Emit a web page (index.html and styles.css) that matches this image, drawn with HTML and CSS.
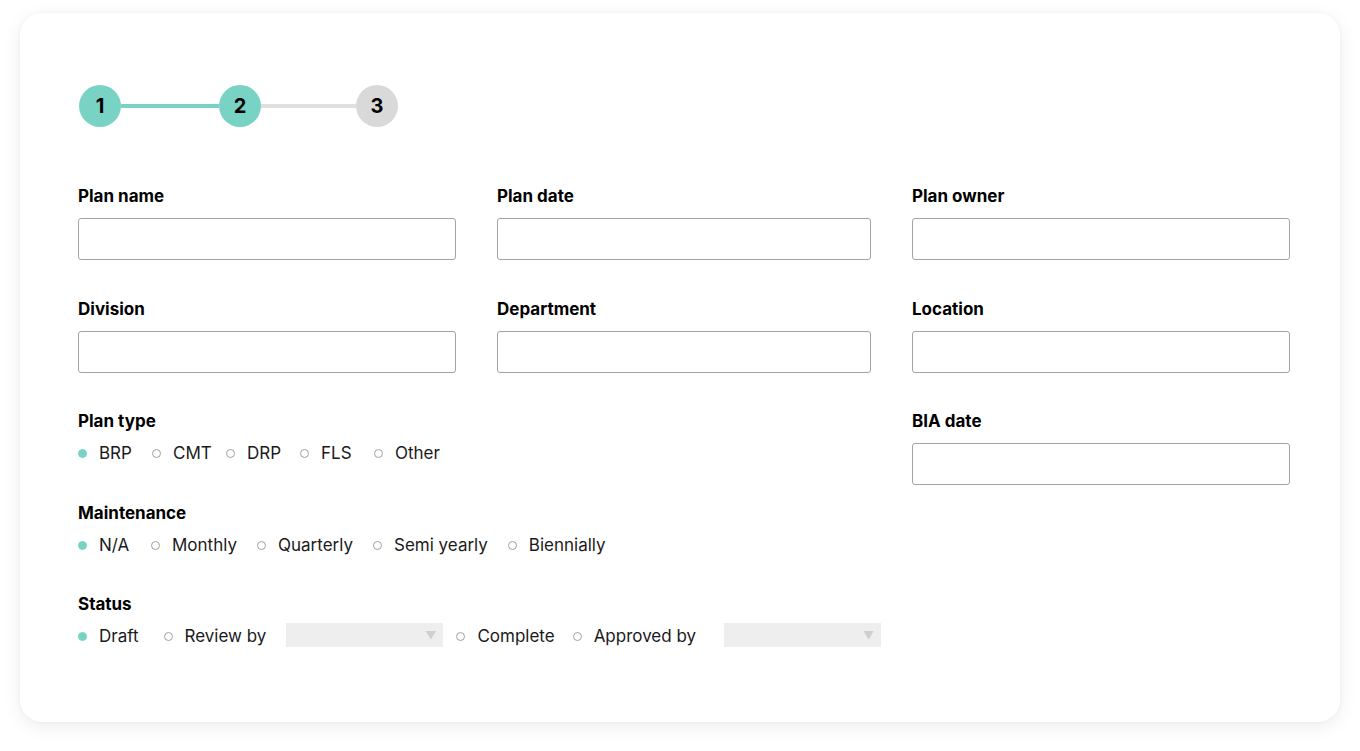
FILE: index.html
```html
<!DOCTYPE html>
<html lang="en">
<head>
<meta charset="utf-8">
<title>Plan details</title>
<link rel="stylesheet" href="styles.css">
</head>
<body>
<div class="card">
  <div class="stepper">
    <div class="step done">1</div>
    <div class="bar done"></div>
    <div class="step done">2</div>
    <div class="bar bar2"></div>
    <div class="step">3</div>
  </div>

  <div class="form">
    <div class="field">
      <div class="label">Plan name</div>
      <div class="input"></div>
    </div>
    <div class="field">
      <div class="label">Plan date</div>
      <div class="input"></div>
    </div>
    <div class="field">
      <div class="label">Plan owner</div>
      <div class="input"></div>
    </div>

    <div class="field">
      <div class="label">Division</div>
      <div class="input"></div>
    </div>
    <div class="field">
      <div class="label">Department</div>
      <div class="input"></div>
    </div>
    <div class="field">
      <div class="label">Location</div>
      <div class="input"></div>
    </div>

    <div class="groups">
      <div class="group">
        <div class="label">Plan type</div>
        <div class="radios fixed">
          <div class="opt"><span class="dot on"></span>BRP</div>
          <div class="opt"><span class="dot"></span>CMT</div>
          <div class="opt"><span class="dot"></span>DRP</div>
          <div class="opt"><span class="dot"></span>FLS</div>
          <div class="opt"><span class="dot"></span>Other</div>
        </div>
      </div>
      <div class="group">
        <div class="label">Maintenance</div>
        <div class="radios">
          <div class="opt"><span class="dot on"></span>N/A</div>
          <div class="opt"><span class="dot"></span>Monthly</div>
          <div class="opt"><span class="dot"></span>Quarterly</div>
          <div class="opt"><span class="dot"></span>Semi yearly</div>
          <div class="opt"><span class="dot"></span>Biennially</div>
        </div>
      </div>
      <div class="group group-status">
        <div class="label">Status</div>
        <div class="radios status">
          <div class="opt s-draft"><span class="dot on"></span>Draft</div>
          <div class="opt s-review"><span class="dot"></span>Review by</div>
          <div class="select s-sel1"><span class="caret">▼</span></div>
          <div class="opt s-complete"><span class="dot"></span>Complete</div>
          <div class="opt s-approved"><span class="dot"></span>Approved by</div>
          <div class="select"><span class="caret">▼</span></div>
        </div>
      </div>
    </div>

    <div class="field field-bia">
      <div class="label">BIA date</div>
      <div class="input"></div>
    </div>
  </div>
</div>
</body>
</html>
```

FILE: styles.css
```css
* { box-sizing: border-box; }

html, body {
  margin: 0;
  padding: 0;
  background: #ffffff;
}

body {
  font-family: Inter, "Liberation Sans", sans-serif;
  color: #111;
  padding: 13px 20px 29px;
}

.card {
  height: 709px;
  background: #fff;
  border-radius: 22px;
  box-shadow: 0 4px 18px rgba(0, 0, 0, 0.08), 0 0 4px rgba(0, 0, 0, 0.03);
  padding: 72px 50px 0 58px;
}

/* stepper */
.stepper {
  display: flex;
  align-items: center;
  margin-left: 1px;
}

.step {
  width: 42px;
  height: 42px;
  border-radius: 50%;
  background: #d9d9d9;
  display: flex;
  align-items: center;
  justify-content: center;
  font-weight: 700;
  font-size: 20px;
  color: #000;
}

.step.done { background: #79d3c5; }

.bar {
  height: 4px;
  width: 98px;
  background: #e0e0e0;
}

.bar.done { background: #79d3c5; }
.bar2 { width: 95px; }

/* form */
.form {
  margin-top: 58px;
  display: grid;
  grid-template-columns: 378px 374px 378px;
  column-gap: 41px;
  row-gap: 38px;
  align-items: start;
}

.label {
  font-weight: 700;
  font-size: 17px;
  line-height: 20px;
  padding-top: 1px;
  color: #000;
}

.field .label { margin-bottom: 12px; }

.field-bia { margin-top: -1px; }

.input {
  height: 42px;
  border: 1px solid #a3a3a3;
  border-radius: 3px;
  background: #fff;
}

.groups {
  grid-column: 1 / span 2;
  display: flex;
  flex-direction: column;
  gap: 39px;
  margin-top: -1px;
}

.group .label { margin-bottom: 12px; }

.group-status { margin-top: -1px; }

.radios {
  display: flex;
  align-items: center;
  gap: 20px;
  font-size: 17px;
  line-height: 20px;
  height: 20px;
  color: #1a1a1a;
}

.opt {
  display: flex;
  align-items: center;
  gap: 12px;
  white-space: nowrap;
  min-width: 53px;
  flex: none;
}

.radios.fixed { gap: 0; }
.radios.fixed .opt { width: 74px; }

.dot {
  width: 9px;
  height: 9px;
  border-radius: 50%;
  border: 1px solid #a0a0a0;
  background: #fff;
  flex: none;
}

.dot.on {
  background: #79d3c5;
  border-color: #79d3c5;
}

.status { gap: 0; }
.s-draft { margin-right: 25px; }
.s-review { margin-right: 20px; }
.s-sel1 { margin-right: 13px; }
.s-complete { margin-right: 18px; }
.s-approved { margin-right: 28px; }

.select {
  width: 157px;
  height: 24px;
  flex: none;
  background: #eeeeee;
  display: flex;
  align-items: center;
  justify-content: flex-end;
  padding-right: 7px;
  margin-top: -2px;
}

.caret {
  font-size: 11px;
  line-height: 1;
  color: #cfcfcf;
}
```
